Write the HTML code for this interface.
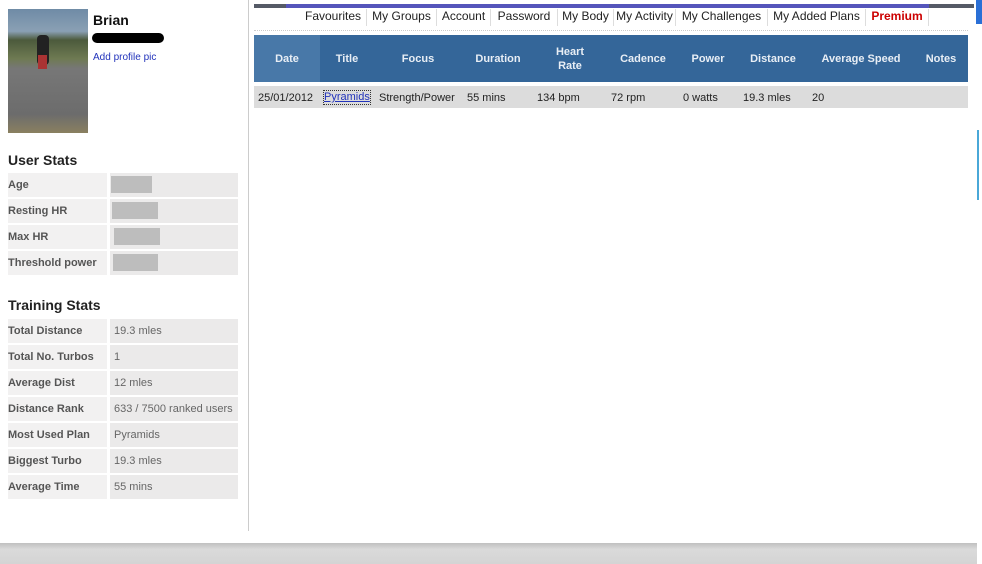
<!DOCTYPE html>
<html><head><meta charset="utf-8"><style>
*{margin:0;padding:0;box-sizing:border-box}
body{width:982px;height:564px;background:#fff;font-family:"Liberation Sans",Arial,sans-serif;position:relative;overflow:hidden;font-size:11px;color:#333}
.a{position:absolute}
.lbl{position:absolute;left:8px;width:99px;height:24px;background:#f2f1f1;color:#555;line-height:25px;font-size:11px;font-weight:bold}
.val{position:absolute;left:110px;width:128px;height:24px;background:#ebeaea;color:#666;line-height:25px;padding-left:4px;font-size:11px}
.blk{position:absolute;height:17px;background:#bdbdbd;top:3px}
h3{position:absolute;left:8px;font-size:14px;color:#222}
.tab{position:absolute;top:9px;height:17px;font-size:12px;color:#222;text-align:center;border-right:1px solid #ddd;line-height:15px}
.th{position:absolute;top:35px;height:47px;color:#e8eef5;font-weight:bold;font-size:11px;display:flex;align-items:center;justify-content:center;text-align:center;line-height:14px}
.td{position:absolute;top:86px;height:22px;line-height:22px;font-size:11px;color:#222}
</style></head><body>
<div class="a" style="left:8px;top:9px;width:80px;height:124px;background:linear-gradient(#6f8ba6 0,#8aa0b4 18%,#4c5a3c 25%,#6e7a52 40%,#777 48%,#6c6c6c 85%,#8a8060 100%)"></div>
<div class="a" style="left:37px;top:35px;width:12px;height:30px;background:#222;border-radius:4px"></div>
<div class="a" style="left:38px;top:55px;width:9px;height:14px;background:#a33"></div>
<div class="a" style="left:93px;top:12px;font-size:14px;font-weight:bold;color:#111">Brian</div>
<div class="a" style="left:92px;top:33px;width:72px;height:10px;background:#000;border-radius:5px"></div>
<div class="a" style="left:93px;top:52px;font-size:10px;color:#2233bb">Add profile pic</div>
<h3 style="top:152px">User Stats</h3>
<div class="lbl" style="top:173px">Age</div><div class="val" style="top:173px"><div class="blk" style="left:1px;width:41px"></div></div>
<div class="lbl" style="top:199px">Resting HR</div><div class="val" style="top:199px"><div class="blk" style="left:2px;width:46px"></div></div>
<div class="lbl" style="top:225px">Max HR</div><div class="val" style="top:225px"><div class="blk" style="left:4px;width:46px"></div></div>
<div class="lbl" style="top:251px">Threshold power</div><div class="val" style="top:251px"><div class="blk" style="left:3px;width:45px"></div></div>
<h3 style="top:297px">Training Stats</h3>
<div class="lbl" style="top:319px">Total Distance</div><div class="val" style="top:319px">19.3 mles</div>
<div class="lbl" style="top:345px">Total No. Turbos</div><div class="val" style="top:345px">1</div>
<div class="lbl" style="top:371px">Average Dist</div><div class="val" style="top:371px">12 mles</div>
<div class="lbl" style="top:397px">Distance Rank</div><div class="val" style="top:397px">633 / 7500 ranked users</div>
<div class="lbl" style="top:423px">Most Used Plan</div><div class="val" style="top:423px">Pyramids</div>
<div class="lbl" style="top:449px">Biggest Turbo</div><div class="val" style="top:449px">19.3 mles</div>
<div class="lbl" style="top:475px">Average Time</div><div class="val" style="top:475px">55 mins</div>
<div class="a" style="left:248px;top:0;width:1px;height:531px;background:#ccc"></div>
<div class="a" style="left:0;top:543px;width:977px;height:21px;background:linear-gradient(#c0c0c0,#dadada 30%,#d4d4d4)"></div>
<div class="a" style="left:254px;top:4px;width:720px;height:4px;background:#555a66"></div>
<div class="a" style="left:286px;top:4px;width:643px;height:4px;background:#5555bb"></div>
<div class="tab" style="left:300px;width:67px">Favourites</div>
<div class="tab" style="left:367px;width:70px">My Groups</div>
<div class="tab" style="left:437px;width:54px">Account</div>
<div class="tab" style="left:491px;width:67px">Password</div>
<div class="tab" style="left:558px;width:56px">My Body</div>
<div class="tab" style="left:614px;width:62px">My Activity</div>
<div class="tab" style="left:676px;width:92px">My Challenges</div>
<div class="tab" style="left:768px;width:98px">My Added Plans</div>
<div class="tab" style="left:866px;width:63px;color:#cc0000;font-weight:bold">Premium</div>
<div class="a" style="left:254px;top:30px;width:714px;border-top:1px dotted #ccc"></div>
<div class="a" style="left:254px;top:35px;width:714px;height:47px;background:#346699"></div>
<div class="a" style="left:254px;top:35px;width:66px;height:47px;background:#4878a8"></div>
<div class="th" style="left:254px;width:66px">Date</div>
<div class="th" style="left:320px;width:54px">Title</div>
<div class="th" style="left:384px;width:68px">Focus</div>
<div class="th" style="left:464px;width:68px">Duration</div>
<div class="th" style="left:540px;width:60px">Heart<br>Rate</div>
<div class="th" style="left:608px;width:70px">Cadence</div>
<div class="th" style="left:682px;width:52px">Power</div>
<div class="th" style="left:740px;width:66px">Distance</div>
<div class="th" style="left:810px;width:102px">Average Speed</div>
<div class="th" style="left:916px;width:50px">Notes</div>
<div class="a" style="left:254px;top:86px;width:714px;height:22px;background:#dcdcdc"></div>
<div class="td" style="left:258px;top:87px">25/01/2012</div>
<div class="td" style="left:324px;color:#2233bb;text-decoration:underline;outline:1px dotted #333;height:13px;line-height:13px;top:91px">Pyramids</div>
<div class="td" style="left:379px;top:87px">Strength/Power</div>
<div class="td" style="left:467px;top:87px">55 mins</div>
<div class="td" style="left:537px;top:87px">134 bpm</div>
<div class="td" style="left:611px;top:87px">72 rpm</div>
<div class="td" style="left:683px;top:87px">0 watts</div>
<div class="td" style="left:743px;top:87px">19.3 mles</div>
<div class="td" style="left:812px;top:87px">20</div>
<div class="a" style="left:977px;top:130px;width:2px;height:70px;background:#4aa8d8"></div>
<div class="a" style="left:976px;top:0;width:6px;height:24px;background:#2a6fd6"></div>
</body></html>
